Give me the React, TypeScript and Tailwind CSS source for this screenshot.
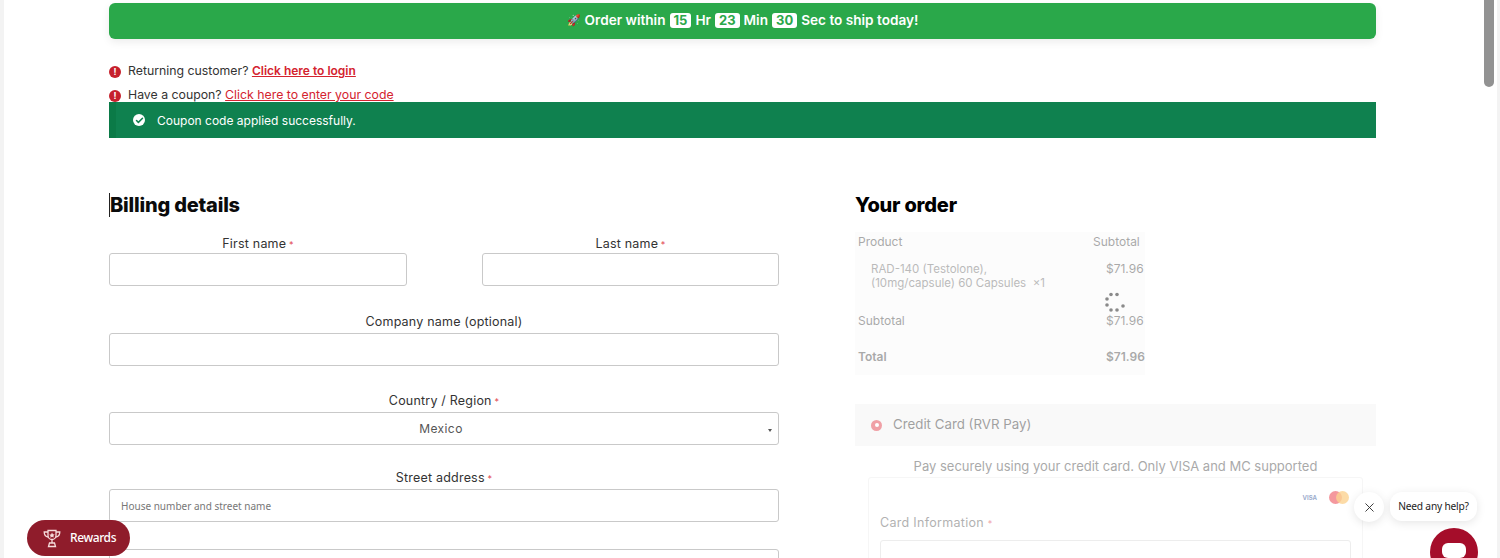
import { Check, X } from 'lucide-react'

const labelClass = 'block text-center text-[12.5px] leading-[16px] tracking-[0.2px] text-[#333]'
const inputClass = 'block h-[33px] w-full rounded-[3px] border border-[#c9c9c9] bg-white'

function Alert({ children }: { children: React.ReactNode }) {
  return (
    <div className="flex h-[24px] items-center gap-[7px] pt-[1px] text-[12.3px] text-[#333]">
      <span className="flex h-[12px] w-[12px] items-center justify-center rounded-full bg-[#c6202c] text-[9px] leading-none font-bold text-white">!</span>
      <span>{children}</span>
    </div>
  )
}

function Timer({ value }: { value: string }) {
  return <span className="rounded-[3px] bg-white px-[4px] text-[13px] leading-[15px] font-bold text-[#2aa84a]">{value}</span>
}

function Field({ label, optional, className, children }: { label: string; optional?: boolean; className?: string; children: React.ReactNode }) {
  return (
    <div className={className}>
      <label className={labelClass}>
        {label}
        {!optional && <span className="text-[9px] leading-none text-[#e2444f]"> *</span>}
      </label>
      {children}
    </div>
  )
}

export default function App() {
  return (
    <div className="relative h-[558px] overflow-hidden bg-white font-['Inter','Liberation_Sans',sans-serif]">
      <div className="h-full border-l-4 border-[#f3f3f3] pt-[3px] pr-[124px] pl-[105px]">
        <div className="flex h-[36px] items-center justify-center gap-[4px] rounded-[6px] bg-[#2aa84a] pb-[1px] text-[13.6px] font-semibold text-white shadow-[0_3px_8px_rgba(0,0,0,0.08)]">
          <span className="text-[11px]">🚀</span>
          <span>Order within</span>
          <Timer value="15" />
          <span>Hr</span>
          <Timer value="23" />
          <span>Min</span>
          <Timer value="30" />
          <span>Sec to ship today!</span>
        </div>

        <div className="mt-[20px] h-[43px]">
          <Alert>
            Returning customer? <a className="text-[12px] font-semibold text-[#d4232f] underline">Click here to login</a>
          </Alert>
          <Alert>
            Have a coupon? <a className="text-[#d4232f] underline">Click here to enter your code</a>
          </Alert>
        </div>

        <div className="flex h-[36px] items-center border-l-[7px] border-[#0b7a47] bg-[#0f814f] pl-[17px] text-[12px] text-white">
          <span className="flex h-[12px] w-[12px] items-center justify-center rounded-full bg-white text-[#0f814f]">
            <Check size={9} strokeWidth={4} />
          </span>
          <span className="ml-[12px] pt-[1px]">Coupon code applied successfully.</span>
        </div>

        <div className="mt-[55px] flex gap-[76px]">
          <div className="w-[670px]">
            <h3 className="border-l border-[#222] text-[20px] leading-[24px] font-extrabold tracking-[-0.2px] text-[#0b0b0b]">Billing details</h3>
            <div className="mt-[19px] grid grid-cols-[298px_297px] gap-x-[75px]">
              <Field label="First name">
                <input className={`mt-[1px] ${inputClass}`} />
              </Field>
              <Field label="Last name">
                <input className={`mt-[1px] ${inputClass}`} />
              </Field>
            </div>
            <Field label="Company name (optional)" optional className="mt-[28px]">
              <input className={`mt-[3px] ${inputClass}`} />
            </Field>
            <Field label="Country / Region" className="mt-[27px]">
              <div className={`relative mt-[3px] flex items-center justify-center pr-[6px] text-[12px] tracking-[0.4px] text-[#555] ${inputClass}`}>
                Mexico
                <span className="absolute top-[16px] right-[6px] h-0 w-0 border-x-[2px] border-t-[3px] border-x-transparent border-t-[#555]" />
              </div>
            </Field>
            <Field label="Street address" className="mt-[25px]">
              <input placeholder="House number and street name" className={`mt-[3px] px-[11px] font-['Noto_Sans',sans-serif] text-[10px] placeholder:text-[#777] ${inputClass}`} />
            </Field>
            <input className={`mt-[27px] ${inputClass}`} />
          </div>

          <div className="w-[521px]">
            <h3 className="text-[20px] leading-[24px] font-extrabold tracking-[-0.2px] text-black">Your order</h3>
            <div className="opacity-50">
              <div className="mt-[15px] w-[290px] bg-[#fafafa] pl-[3px] text-[12px] text-[#555]">
                <div className="grid h-[20px] grid-cols-[235px_1fr] items-center">
                  <span>Product</span>
                  <span>Subtotal</span>
                </div>
                <div className="grid h-[51px] grid-cols-[235px_1fr] pt-[10px] leading-[14px]">
                  <span className="pl-[13px] text-[11.5px] text-[#777]">
                    RAD-140 (Testolone),
                    <br />
                    (10mg/capsule) 60 Capsules &nbsp;×1
                  </span>
                  <span className="pl-[13px]">$71.96</span>
                </div>
                <div className="grid h-[36px] grid-cols-[235px_1fr] items-center">
                  <span>Subtotal</span>
                  <span className="pl-[13px]">$71.96</span>
                </div>
                <div className="grid h-[36px] grid-cols-[235px_1fr] items-center font-semibold">
                  <span>Total</span>
                  <span className="pl-[13px]">$71.96</span>
                </div>
              </div>

              <div className="mt-[29px] flex h-[42px] items-center gap-[11px] bg-[#f5f5f5] pl-[16px] text-[13.3px] text-[#444]">
                <span className="flex h-[11px] w-[11px] items-center justify-center rounded-full bg-[#e2444f]">
                  <span className="h-[4px] w-[4px] rounded-full bg-white" />
                </span>
                Credit Card (RVR Pay)
              </div>
              <p className="mt-[12px] text-center text-[13px] leading-[16px] text-[#555]">Pay securely using your credit card. Only VISA and MC supported</p>
              <div className="mx-[13px] mt-[3px] h-[100px] rounded-[3px] border border-[#eee] bg-white px-[11px] pt-[12px]">
                <div className="flex h-[14px] items-center justify-end gap-[12px] pr-[2px]">
                  <span className="text-[6px] font-bold text-[#3a5a9c]">VISA</span>
                  <span className="flex">
                    <span className="h-[13px] w-[13px] rounded-full bg-[#eb3340]" />
                    <span className="-ml-[6px] h-[13px] w-[13px] rounded-full bg-[#f9a825] opacity-80" />
                  </span>
                </div>
                <div className="mt-[11px] text-[12.5px] leading-[16px] tracking-[0.3px] text-[#666]">
                  Card Information <span className="text-[9px] leading-none text-[#e2444f]">*</span>
                </div>
                <div className="mt-[9px] h-[40px] rounded-[3px] border border-[#ddd]" />
              </div>
            </div>
          </div>
        </div>
      </div>

      {/* spinner over the order table */}
      <svg className="absolute top-[292px] left-[1105px]" width="22" height="22" viewBox="0 0 22 22" fill="#8a8a8a">
        <circle cx="6" cy="2.5" r="1.8" />
        <circle cx="12" cy="2.5" r="1.8" />
        <circle cx="2" cy="7" r="1.8" />
        <circle cx="2" cy="13" r="1.8" />
        <circle cx="6" cy="18" r="1.8" />
        <circle cx="12" cy="18" r="1.8" />
        <circle cx="18" cy="14" r="1.8" />
      </svg>

      {/* scrollbar */}
      <div className="absolute top-0 right-[6px] h-[87px] w-[10px] rounded-b-[5px] bg-[#929292]" />
      <div className="absolute top-0 right-0 h-full w-[3px] bg-[#f3f3f3]" />

      {/* rewards */}
      <button className="absolute top-[520px] left-[27px] flex h-[36px] w-[103px] items-center gap-[9px] rounded-full bg-[#8f1c2b] pl-[16px] font-['Noto_Sans',sans-serif] text-[12px] font-medium tracking-[-0.4px] text-white">
        <svg width="18" height="19" viewBox="0 0 18 19" fill="none" stroke="#f6dcdc" strokeWidth="1.3">
          <path d="M5 1.5h8v5a4 4 0 0 1-8 0z" />
          <path d="M9 3.6l.9 1.7 1.8.2-1.3 1.3.3 1.8L9 7.8l-1.7.9.3-1.8-1.3-1.3 1.8-.2z" fill="#f6dcdc" stroke="none" />
          <path d="M5 3H1.2c0 3 1.4 4.6 4 5M13 3h3.8c0 3-1.4 4.6-4 5" />
          <path d="M9 10.5v3M6.5 14h5l1 3.5h-7z" />
        </svg>
        Rewards
      </button>

      {/* chat widget */}
      <button className="absolute top-[492px] left-[1354px] flex h-[30px] w-[30px] items-center justify-center rounded-full bg-white text-[#333] shadow-[0_2px_10px_rgba(0,0,0,0.1)]">
        <X size={15} strokeWidth={1.5} />
      </button>
      <div className="absolute top-[492px] left-[1390px] flex h-[29px] w-[87px] items-center justify-center rounded-[12px] bg-white font-['Noto_Sans',sans-serif] text-[10.2px] tracking-[-0.2px] text-[#222] shadow-[0_2px_10px_rgba(0,0,0,0.1)]">
        Need any help?
      </div>
      <div className="absolute top-[528px] left-[1430px] flex h-[48px] w-[48px] justify-center rounded-full bg-[#a50d2a] pt-[15px]">
        <span className="h-[15px] w-[24px] rounded-[6px] bg-white" />
      </div>
    </div>
  )
}
